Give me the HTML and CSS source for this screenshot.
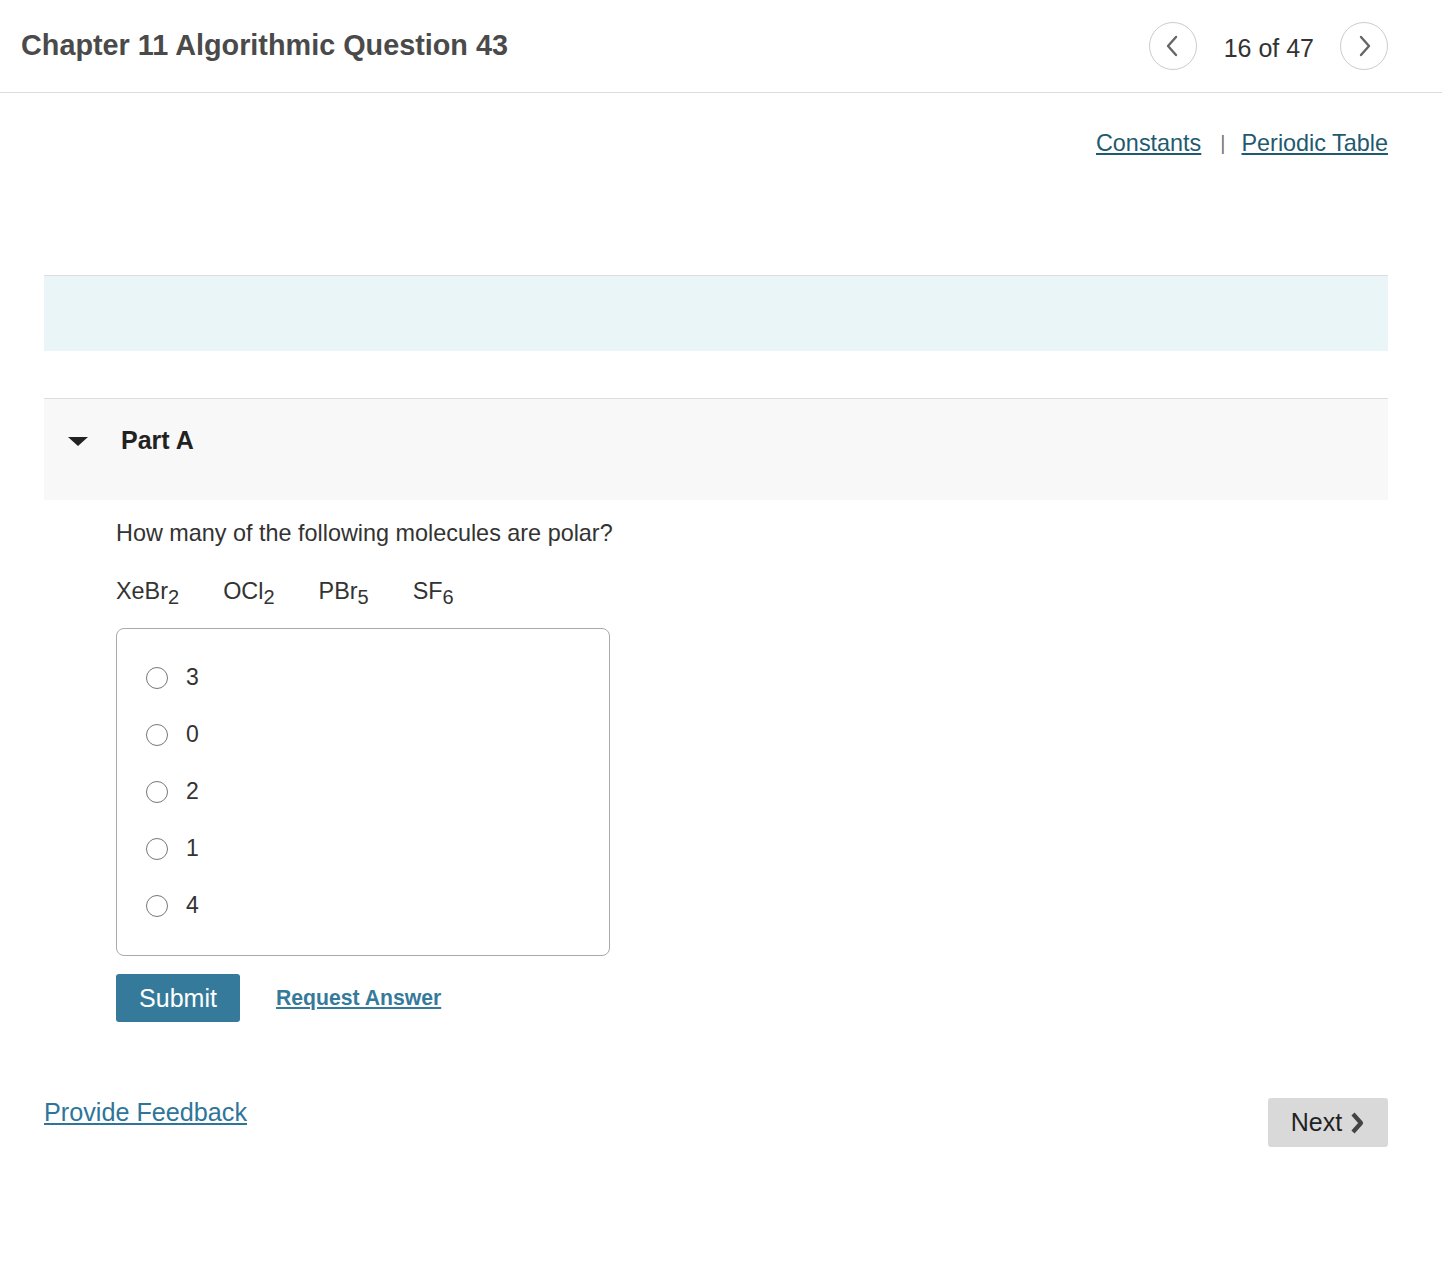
FILE: index.html
```html
<!DOCTYPE html>
<html>

<head>
  <meta charset="utf-8" />
  <meta name="viewport" content="width=device-width,minimum-scale=1.0,maximum-scale=1.0,user-scalable=no" />
  <link rel="stylesheet" href="styles.css">
</head>

<body>
  <div class="header">
    <h1 class="title">Chapter 11 Algorithmic Question 43</h1>
    <div class="pager">
      <a class="circle-btn" href="javascript:void(0)">
        <svg width="20" height="24" viewBox="0 0 20 24"><polyline points="13,3 5,12 13,21" fill="none" stroke="#666" stroke-width="2.4" stroke-linecap="round" stroke-linejoin="round" /></svg>
      </a>
      <span class="count">16 of 47</span>
      <a class="circle-btn" href="javascript:void(0)">
        <svg width="20" height="24" viewBox="0 0 20 24"><polyline points="7,3 15,12 7,21" fill="none" stroke="#666" stroke-width="2.4" stroke-linecap="round" stroke-linejoin="round" /></svg>
      </a>
    </div>
  </div>

  <div class="main">
    <div class="tools">
      <a href="javascript:void(0)">Constants</a>
      <span class="sep">|</span>
      <a href="javascript:void(0)">Periodic Table</a>
    </div>

    <div class="intro"></div>

    <div class="part">
      <div class="part-head">
        <span class="caret"></span>
        <h2>Part A</h2>
      </div>
      <div class="part-body">
        <p class="question">How many of the following molecules are polar?</p>
        <p class="formulas">
          <span>XeBr<sub>2</sub></span>
          <span>OCl<sub>2</sub></span>
          <span>PBr<sub>5</sub></span>
          <span>SF<sub>6</sub></span>
        </p>
        <ul class="options">
          <li><span class="radio"></span>3</li>
          <li><span class="radio"></span>0</li>
          <li><span class="radio"></span>2</li>
          <li><span class="radio"></span>1</li>
          <li><span class="radio"></span>4</li>
        </ul>
        <div class="actions">
          <a class="submit" href="javascript:void(0)">Submit</a>
          <a class="request" href="javascript:void(0)">Request Answer</a>
        </div>
      </div>
    </div>

    <div class="footer">
      <a class="feedback" href="javascript:void(0)">Provide Feedback</a>
      <a class="next" href="javascript:void(0)">Next
        <svg width="16" height="22" viewBox="0 0 16 22"><polyline points="4,2 12,11 4,20" fill="none" stroke="#444" stroke-width="4.2" stroke-linejoin="round" /></svg>
      </a>
    </div>
  </div>
</body>
</html>
```

FILE: styles.css
```css
body {
  margin: 0;
  padding: 0;
  background-color: #fff;
  font-family: "Liberation Sans", Arial, sans-serif;
  color: #333;
}

h1,
h2,
p,
ul,
li {
  margin: 0;
  padding: 0;
}

ul {
  list-style: none;
}

.header {
  height: 92px;
  border-bottom: 1px solid #ddd;
  display: flex;
  align-items: center;
  justify-content: space-between;
  padding: 0 54px 0 21px;
}

.title {
  font-size: 28.8px;
  font-weight: bold;
  color: #4a4a4a;
  margin-top: -2px;
}

.pager {
  display: flex;
  align-items: center;
}

.circle-btn {
  width: 46px;
  height: 46px;
  border: 1px solid #ccc;
  border-radius: 50%;
  display: flex;
  align-items: center;
  justify-content: center;
}

.count {
  font-size: 25px;
  color: #333;
  margin: 4px 26px 0 27px;
}

.main {
  width: 1344px;
  margin-left: 44px;
}

.tools {
  display: flex;
  justify-content: flex-end;
  align-items: center;
  margin-top: 36px;
  font-size: 23.4px;
  line-height: 28px;
}

.tools a {
  color: #1f5a70;
}

.tools .sep {
  color: #777;
  font-size: 20px;
  margin: 0 16px 0 19px;
}

.intro {
  margin-top: 118px;
  height: 75px;
  border-top: 1px solid #ddd;
  background-color: #eaf5f7;
}

.part {
  margin-top: 47px;
}

.part-head {
  height: 102px;
  border-top: 1px solid #ddd;
  background-color: #f8f8f8;
  display: flex;
  align-items: flex-start;
  padding-top: 27px;
  box-sizing: border-box;
}

.caret {
  width: 0;
  height: 0;
  border-left: 10px solid transparent;
  border-right: 10px solid transparent;
  border-top: 9px solid #222;
  margin: 11px 33px 0 24px;
}

.part-head h2 {
  font-size: 25px;
  line-height: 28px;
  font-weight: bold;
  color: #222;
}

.part-body {
  padding-left: 72px;
}

.question {
  font-size: 23.4px;
  line-height: 28px;
  margin-top: 19px;
  color: #333;
}

.formulas {
  font-size: 23.4px;
  line-height: 28px;
  margin-top: 30px;
  display: flex;
}

.formulas span {
  margin-right: 44px;
}

.formulas sub {
  font-size: 20px;
  line-height: 0;
  vertical-align: -5px;
}

.options {
  margin-top: 23px;
  width: 494px;
  height: 328px;
  border: 1px solid #aaa;
  border-radius: 8px;
  padding-top: 20px;
  box-sizing: border-box;
}

.options li {
  display: flex;
  align-items: center;
  height: 57px;
  font-size: 23px;
  color: #333;
}

.radio {
  width: 20px;
  height: 20px;
  border: 1.5px solid #777;
  border-radius: 50%;
  margin: 0 18px 0 29px;
}

.actions {
  display: flex;
  align-items: center;
  margin-top: 18px;
}

.submit {
  display: inline-block;
  width: 124px;
  height: 48px;
  line-height: 48px;
  text-align: center;
  background-color: #357a9a;
  color: #fff;
  font-size: 25px;
  border-radius: 3px;
  text-decoration: none;
}

.request {
  margin-left: 36px;
  font-size: 21.2px;
  font-weight: bold;
  color: #357a9a;
}

.footer {
  display: flex;
  justify-content: space-between;
  align-items: flex-start;
  margin-top: 76px;
}

.feedback {
  font-size: 25.2px;
  color: #2e7599;
}

.next {
  display: flex;
  align-items: center;
  justify-content: center;
  gap: 7px;
  width: 120px;
  height: 49px;
  background-color: #d9d9d9;
  border-radius: 3px;
  color: #222;
  font-size: 25px;
  text-decoration: none;
}
```
